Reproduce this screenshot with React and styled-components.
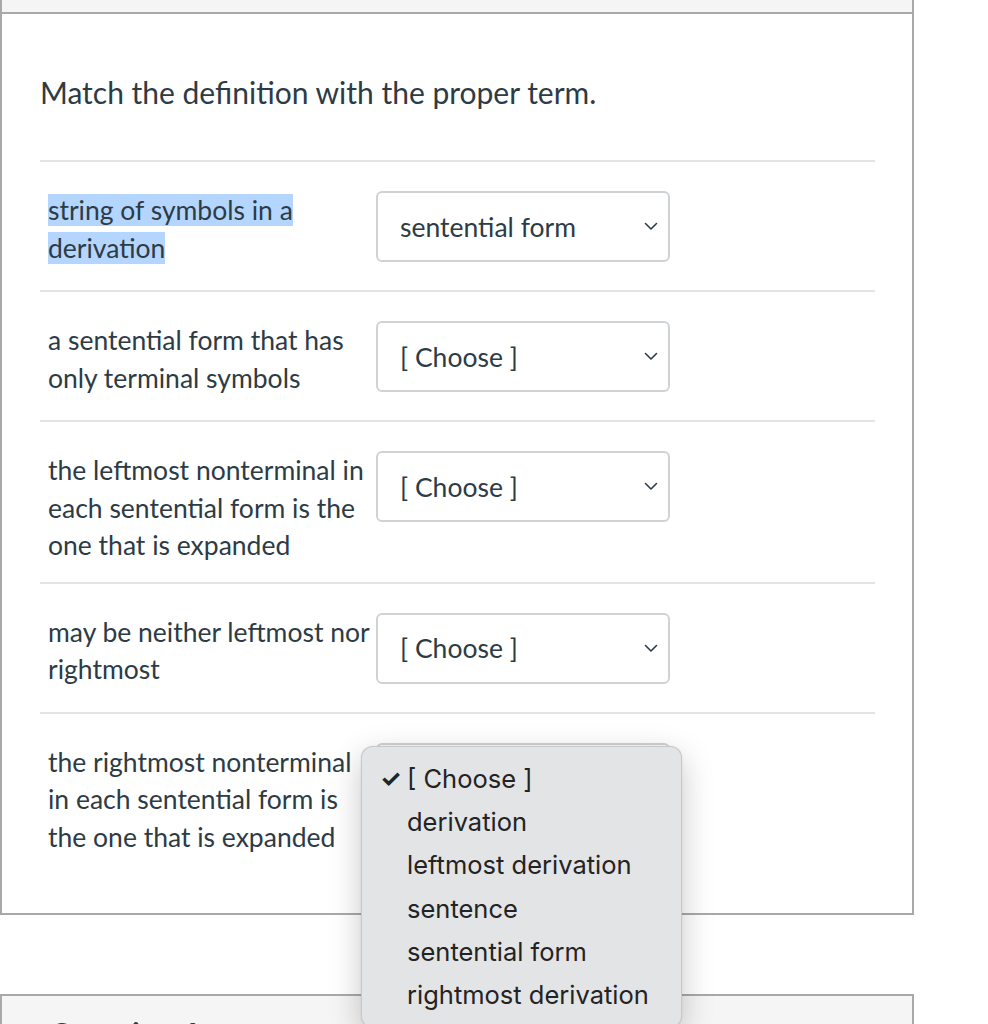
import React from "react";
import styled, { createGlobalStyle } from "styled-components";

const GlobalStyle = createGlobalStyle`
  html, body { margin: 0; padding: 0; background: #ffffff; }
  body { font-family: Lato, "Noto Sans", sans-serif; color: #2d3b45; overflow: hidden; }
  * { box-sizing: border-box; }
  ::selection { background: #b4d5fe; }
`;

const Page = styled.div`
  width: 988px;
  height: 1024px;
  overflow: hidden;
`;

const Card = styled.section`
  width: 914px;
  border: 2px solid #a9a9a9;
  border-top: none;
  background: #ffffff;
`;

const CardHeaderStrip = styled.div`
  height: 14px;
  background: #f5f5f5;
  border-bottom: 2px solid #a9a9a9;
`;

const CardBody = styled.div`
  padding: 56px 37px 40px 38px;
`;

const Heading = styled.p`
  margin: 0 0 46px 0;
  font-size: 30px;
  line-height: 44px;
  font-weight: 400;
`;

const Row = styled.div`
  display: flex;
  align-items: flex-start;
  gap: 4px;
  border-top: 2px solid #e4e4e4;
  padding: 30px 0 17px 8px;
  min-height: ${(p) => (p.$last ? "auto" : "130px")};
`;

const Label = styled.div`
  width: 324px;
  font-size: 26.5px;
  line-height: 37.5px;
  flex-shrink: 0;
`;

const Highlight = styled.span`
  background: #b4d5fe;
`;

const SelectWrap = styled.div`
  position: relative;
  margin-top: -1px;
`;

const SelectBox = styled.div`
  width: 294px;
  height: 71px;
  border: 2px solid #d0d3d6;
  border-radius: 6px;
  background: #fff;
  display: flex;
  align-items: center;
  justify-content: space-between;
  padding: 0 10px 0 22px;
  font-size: 26.5px;
`;

const Chevron = () => (
  <svg width="14" height="9" viewBox="0 0 14 9" fill="none">
    <path d="M1.5 1.5 L7 7 L12.5 1.5" stroke="#2d3b45" strokeWidth="1.6" strokeLinecap="round" strokeLinejoin="round" />
  </svg>
);

const Menu = styled.ul`
  position: absolute;
  left: -15px;
  top: 3px;
  width: 321px;
  margin: 0;
  padding: 10px 0 10px 0;
  list-style: none;
  background: #e3e4e6;
  border: 1px solid rgba(0, 0, 0, 0.12);
  border-radius: 12px;
  box-shadow: 0 10px 32px rgba(0, 0, 0, 0.22), 0 0 2px rgba(0, 0, 0, 0.1);
  font-family: Inter, "Liberation Sans", sans-serif;
  z-index: 10;
`;

const MenuItem = styled.li`
  position: relative;
  height: 43.4px;
  line-height: 43.4px;
  padding-left: 45px;
  font-size: 25.5px;
  color: #232323;
`;

const Check = styled.span`
  position: absolute;
  left: 18px;
  top: 0;
  font-size: 24px;
  font-weight: 700;
`;

const Gap = styled.div`
  height: 79px;
`;

const NextCard = styled.section`
  width: 914px;
  height: 200px;
  border: 2px solid #a9a9a9;
  background: #f5f5f5;
  padding: 16px 0 0 48px;
`;

const NextTitle = styled.h2`
  margin: 0;
  font-size: 30px;
  font-weight: 700;
  line-height: 43px;
  color: #2d3b45;
`;

const rows = [
  { text: <><Highlight>string of symbols in a</Highlight><br /><Highlight>derivation</Highlight></>, value: "sentential form" },
  { text: "a sentential form that has only terminal symbols", value: "[ Choose ]" },
  { text: "the leftmost nonterminal in each sentential form is the one that is expanded", value: "[ Choose ]" },
  { text: "may be neither leftmost nor rightmost", value: "[ Choose ]" },
];

const options = ["[ Choose ]", "derivation", "leftmost derivation", "sentence", "sentential form", "rightmost derivation"];

export default function App() {
  return (
    <Page>
      <GlobalStyle />
      <Card>
        <CardHeaderStrip />
        <CardBody>
          <Heading>Match the definition with the proper term.</Heading>
          {rows.map((r, i) => (
            <Row key={i}>
              <Label>{r.text}</Label>
              <SelectWrap>
                <SelectBox>
                  <span>{r.value}</span>
                  <Chevron />
                </SelectBox>
              </SelectWrap>
            </Row>
          ))}
          <Row $last>
            <Label>the rightmost nonterminal in each sentential form is the one that is expanded</Label>
            <SelectWrap>
              <SelectBox>
                <span>[ Choose ]</span>
                <Chevron />
              </SelectBox>
              <Menu>
                {options.map((o, i) => (
                  <MenuItem key={o}>
                    {i === 0 && <Check>✓</Check>}
                    {o}
                  </MenuItem>
                ))}
              </Menu>
            </SelectWrap>
          </Row>
        </CardBody>
      </Card>
      <Gap />
      <NextCard>
        <NextTitle>Question 6</NextTitle>
      </NextCard>
    </Page>
  );
}
